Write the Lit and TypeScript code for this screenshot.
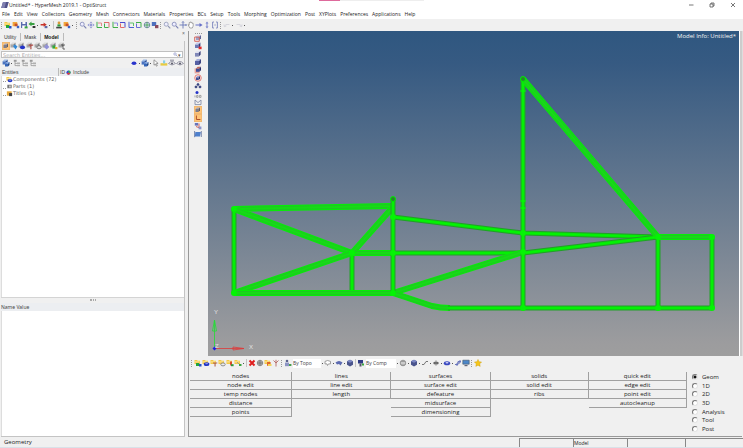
import { LitElement, html, svg, css } from "lit";
import { customElement, property, state } from "lit/decorators.js";

const box = (x: number, y: number, s: number, front: string, top: string, side: string) => svg`
  <path fill=${front} d="M${x} ${y + s / 3}h${(s * 2) / 3}v${(s * 2) / 3}h-${(s * 2) / 3}z"/>
  <path fill=${top} d="M${x} ${y + s / 3}l${s / 3}-${s / 3}h${(s * 2) / 3}l-${s / 3} ${s / 3}z"/>
  <path fill=${side} d="M${x + (s * 2) / 3} ${y + s / 3}l${s / 3}-${s / 3}v${(s * 2) / 3}l-${s / 3} ${s / 3}z"/>`;
const folder = svg`<path fill="#f3c948" d="M0.5 1h2.5l.7.8h2.3v3.2h-5.5z"/><path fill="#ffe9a0" d="M1 2.4h4.5v1h-4.5z"/>`;
const blueBox = box(1, 1, 6, "#5560a4", "#a6b0dc", "#3c4582");
const greyBox = box(0.5, 0.5, 5, "#a6a6a6", "#dadada", "#808080");
const axes = (a: string, b: string, flip: boolean) =>
  flip
    ? svg`<path fill="none" stroke=${a} stroke-width="1" d="M1 1.5h5v5"/><path fill="none" stroke=${b} stroke-width="1" d="M1.5 2.5v4h4"/>`
    : svg`<path fill="none" stroke=${a} stroke-width="1" d="M2 .8v5.7h5"/><path fill="none" stroke=${b} stroke-width="1" d="M3 2h3.5v3"/>`;
const eye = svg`<path fill="none" stroke="#889" stroke-width=".8" d="M.5 4.5q3.5-4 7 0q-3.5 3-7 0z"/><circle cx="4" cy="4.4" r="1" fill="#556"/>`;
const lens = (c: string) => svg`<circle cx="3.2" cy="3.2" r="2" fill="#eef" stroke=${c} stroke-width=".8"/><path stroke=${c} stroke-width="1.1" d="M5 5l2.3 2.3"/>`;

const glyphs: Record<string, unknown> = {
  fGreen: svg`${folder}<path fill="#22a53a" d="M2 4h3.2v3H2z"/><path fill="#2452c8" d="M5 5h2.5v2.5H5z"/>`,
  fRed: svg`${folder}<path fill="#d42b1e" d="M4.2 2.500h1.600v4H4.200z"/><path fill="#2c9a35" d="M5 5.2h2.6v2H5z"/>`,
  fBlue: svg`${folder}<ellipse cx="4.6" cy="5.2" rx="2.8" ry="1.9" fill="#2336c4"/><ellipse cx="4.6" cy="4.6" rx="1.5" ry=".7" fill="#8c9bf2"/>`,
  fT: svg`${folder}<path fill="#b0604a" d="M3 3.4h4.3v1.1H5.6v3H4.5v-3H3z"/>`,
  fGrey: svg`${folder}<ellipse cx="5" cy="5.4" rx="2.2" ry="1.5" fill="#eee" stroke="#777" stroke-width=".8"/>`,
  fDot: svg`${folder}<path fill="none" stroke="#999" stroke-width=".9" d="M3 3l3 3"/><path fill="#3aa63e" d="M5 5h2.5v2H5z"/>`,
  save: svg`<path fill="#5a6cae" d="M1 1h6v6H1z"/><path fill="#fff" d="M2.4 1h3v2h-3zM2.2 4.4h3.6V7H2.2z"/><path fill="#3aa63e" d="M4.6 5.4h3v2h-3z"/>`,
  imp: svg`<path fill="#39a042" d="M.5 3l3-2.4v1.5h3v1.8h-3v1.4z"/><path fill="#333" d="M4.6 5h2.8v2H4.6z"/>`,
  exp: svg`<path fill="#c8352a" d="M.6 3h3V1.600l3.200 2.200-3.200 2V4.600h-3z"/><path fill="#606aa8" d="M4.600 5h2.800v2.200H4.600z"/>`,
  user: svg`<circle cx="4" cy="2" r="1.400" fill="#d89a3a"/><path fill="#2d9b3a" d="M2.400 3.400h3.200V5.500H2.400z"/><path fill="#444" d="M1.200 5.800h5.600v1.600H1.200z"/>`,
  fOrange: svg`<path fill="#f2a63a" d="M.6 1h4.600v4.200H.6z"/><path fill="#c7502a" d="M2.600 2.600h3v2.600h-3z"/><path fill="#3c64c8" d="M4.800 4.800h2.400v2.400H4.800z"/>`,
  lens: lens("#7c84b4"),
  lensGrey: lens("#9098b4"),
  fit: svg`<path fill="#9298d4" d="M4 .4l1.500 1.800H2.500zM4 7.600l1.500-1.800H2.500zM.4 4l1.800-1.500v3zM7.600 4L5.800 2.500v3z"/><path fill="#9298d4" d="M2.800 2.800h2.400v2.400H2.800z"/>`,
  xy: axes("#3fae48", "#e08a8a", false),
  yx: axes("#e06a6a", "#3fae48", true),
  xz: axes("#3fae48", "#8a8ae0", false),
  zx: axes("#4a4ad0", "#e06a6a", true),
  yz: axes("#4a62d0", "#60c468", false),
  zy: axes("#3fae48", "#6a6ad8", true),
  globe: svg`<circle cx="4" cy="4" r="2.800" fill="#d6dff2" stroke="#6a76a0" stroke-width=".8"/><path fill="none" stroke="#3fa04a" stroke-width=".8" d="M1 4h6M4 1v6"/>`,
  shade: svg`<path fill="#4e70be" d="M.8 1h4.400v4H.8z"/><path fill="#8a4a5c" d="M4 4h3.400v3.200H4z"/>`,
  cross: svg`<path stroke="#6a78b8" fill="none" stroke-width=".9" d="M4 .5v7M.5 4h7M3 1.600l1-1 1 1M6.500 3l1 1-1 1"/>`,
  hand: svg`<path fill="#fff" stroke="#888" stroke-width=".7" d="M1 3.600l1.200.6V1.600h1V1h1v.6h1v.8h1V5L5.300 7H2.800z"/>`,
  arrow: svg`<path fill="#6670c8" d="M.5 3.500h4V2L7.600 4 4.500 6V4.500h-4z"/>`,
  updown: svg`<path fill="#7a84cc" d="M4 .4l1.500 2H4.500v3.200h1L4 7.600l-1.500-2h1V2.400h-1z"/>`,
  brace: svg`<path fill="none" stroke="#7a84bc" stroke-width=".9" d="M3 1H1.600v6H3M5 1h1.400v6H5M3.400 4h1.300"/>`,
  undo: svg`<path fill="none" stroke="#d2d2da" stroke-width=".9" d="M1.400 5.500q.5-3 5-2M1 3.400l.4 2.300 2-.7"/>`,
  redo: svg`<path fill="none" stroke="#d2d2da" stroke-width=".9" d="M6.600 5.500q-.5-3-5-2M7 3.400l-.4 2.300-2-.7"/>`,
  bBlue: svg`${greyBox}<path fill="#338ad8" d="M3 4l2-1.500L7.500 4.600 5.500 7.400z"/>`,
  bEll: svg`${greyBox}<ellipse cx="4.500" cy="5.400" rx="2.600" ry="1.800" fill="#2434c8"/>`,
  bT: svg`${greyBox}<path fill="#b0504a" d="M2.600 2.600h4.600v1.200H5.500v3.400H4.300V3.800H2.600z"/>`,
  bDisk: svg`${greyBox}<ellipse cx="5" cy="5.200" rx="2.200" ry="1.600" fill="#ddd" stroke="#666" stroke-width=".8"/>`,
  bFit: svg`${greyBox}<path fill="#9292d8" d="M4.600 2l2.800 3-2.800 2.600L2 5z"/>`,
  bGreen: svg`${greyBox}<path fill="#32a73c" d="M2.400 3.400h3v3.200h-3z"/><path fill="#d8b42e" d="M5 5h2.400v2.200H5z"/>`,
  bTree: svg`${greyBox}<path fill="none" stroke="#555" stroke-width=".9" d="M3 3h4M5 3v4h2"/>`,
  cube: blueBox,
  blueCubes: svg`${box(0.6, 0.6, 5, "#4a74c0", "#9cbbe8", "#2d4f98")}${box(3, 3, 4.5, "#3465b8", "#88aee8", "#234888")}`,
  tree: svg`<path fill="#999" d="M.8.8h2.800v2H.8z"/><path fill="none" stroke="#999" stroke-width=".8" d="M2 2.800v3.800h2M2 4.400h2"/><path fill="#b0b0b0" d="M4 3.400h3v1.600H4zM4 5.800h3v1.500H4z"/>`,
  dot: svg`<ellipse cx="4" cy="4.200" rx="2.400" ry="1.700" fill="#2a34cc"/>`,
  pointer: svg`<path fill="#fff" stroke="#777" stroke-width=".7" d="M2 .8v5.400l1.400-1.200 1 2.200.9-.5-1-2.100 1.800-.2z"/>`,
  shapes: svg`<path fill="#e8cb42" d="M.5 6.600h6.800V4.200H.5z"/><path fill="#8ad0e8" d="M3 1.400h2.200v3H3z"/>`,
  eye: eye,
  eyeUp: svg`${eye}<path stroke="#889" d="M2 1.200h4"/>`,
  redFrame: svg`${box(2, 1, 5, "#9aa0c8", "#d8daee", "#5f6598")}<path fill="none" stroke="#d45a50" stroke-width=".9" d="M.7 3h4.600v4.300H.7z"/>`,
  cubeRed: svg`${box(1, 0.6, 5.4, "#6c78b4", "#c4caea", "#343c7c")}<path fill="#e02a2a" d="M4.600 4.600h3v2.600h-3z"/>`,
  cubeLight: svg`${box(1, 1, 5.6, "#8088b8", "#e2e4f2", "#3c447e")}`,
  cubeRing: svg`<circle cx="4" cy="4" r="3.300" fill="#fbe3e0" stroke="#dc6a62" stroke-width=".8"/>${box(2, 2, 4, "#3f4c96", "#9aa6d6", "#27306c")}`,
  cubeFrame: svg`<path fill="#e6a49c" d="M.6 2.400h5v5h-5z"/>${box(2, 0.8, 5, "#3f4c96", "#c3695f", "#27306c")}`,
  diamonds: svg`<path fill="#3a4480" d="M4 .8l1.600 1.700L4 4.200 2.400 2.500zM2 3.200l1.700 1.700L2 6.600.3 4.900zM6 3.200l1.700 1.700L6 6.600 4.300 4.900z"/>`,
  dotSmall: svg`<circle cx="3" cy="2.500" r="1.500" fill="#2434c8"/><path fill="none" stroke="#888" stroke-width=".7" d="M1 5.400v2M2.600 5.400H4v2H2.600zM5.400 5.400H7v2H5.400z"/>`,
  mesh: svg`<path fill="none" stroke="#7a84a0" stroke-width=".8" d="M1 2v4.600h6V2L4 4.600z"/>`,
  oBox: svg`<path fill="#ffc477" stroke="#e6a04a" stroke-width=".6" d="M.2.2h7.600v7.600H.2z"/>${box(1.5, 1.5, 4.5, "#7c7c8c", "#a8a8b8", "#5c5c68")}`,
  oAxis: svg`<path fill="#ffc477" stroke="#e6a04a" stroke-width=".6" d="M.2.2h7.600v7.600H.2z"/><path fill="none" stroke="#b0522a" d="M2.400 1.500v4h4"/>`,
  mix: svg`<path fill="#6874b8" d="M.8 1h3.400v2.600H.8z"/><path fill="none" stroke="#d45a50" stroke-width=".9" d="M2 4.500l5 2M5 1.500v4"/><path fill="#8a94cc" d="M4.600 4.500h2.800v2.800H4.600z"/>`,
  plane: svg`<path fill="#4f80cc" d="M1.400 2h5.400l-.8 4.400H.8z"/><path fill="none" stroke="#2a427c" stroke-width=".6" d="M.6 1v6.200M7.300 1v6"/>`,
  del: svg`<path stroke="#e01f1f" stroke-width="2" d="M1.500 1.500l5 5M6.500 1.500l-5 5"/>`,
  sphere: svg`<circle cx="4" cy="4" r="2.800" fill="#aaa" stroke="#7b7b7b" stroke-width=".6"/><path stroke="#666" stroke-width=".6" d="M1 4h6M4 1v6"/>`,
  helix: svg`${folder}<path fill="#e0672a" d="M3 3h3.600v3.800H3z"/><path fill="#f6d558" d="M4 5h3.500v2H4z"/>`,
  fork: svg`<path fill="none" stroke="#b66a66" stroke-width=".9" d="M4 7.500V3.500M1.500 1.500L4 4l2.500-2.500M4 .8v3"/>`,
  person: svg`<circle cx="3" cy="2" r="1.300" fill="#5a628c"/><path fill="#8c94c4" d="M1 3.600h4v3.600H1z"/><path fill="#47a04d" d="M5 5h2.400v2H5z"/>`,
  topo: svg`<path fill="#2f3a84" d="M1 1h5v3.500H1z"/><path fill="#55556a" d="M2.500 4.500h2v3h-2z"/><path fill="#3aa63e" d="M5 4.500h2v2H5z"/>`,
  bulb: svg`<path fill="#fff" stroke="#888" stroke-width=".8" d="M1 2.400q2.500-1.800 5.500 0v2.500H4.500L3.500 6.500 3 4.900H1z"/>`,
  surf: svg`<path fill="#5c6ab0" d="M.5 3.500q3.500-3 7 0L5.500 6.500 4 5 2 5.500z"/>`,
  wire: svg`<circle cx="4" cy="4" r="2.800" fill="none" stroke="#888" stroke-width=".8"/><path fill="none" stroke="#888" stroke-width=".7" d="M2 2.500h4v3.500H2zM4 1v6"/>`,
  hex: svg`<path fill="#4a548c" d="M4 .7l3 1.600v3.500L4 7.400 1 5.800V2.300z"/><path fill="#7d88c4" d="M4 .7l3 1.600-3 1.500-3-1.500z"/>`,
  slash: svg`<path stroke="#777" fill="none" stroke-width="1" d="M1 5.500h2l2-3h2"/>`,
  disk: svg`<ellipse cx="4" cy="4" rx="2.800" ry="1.500" fill="#666"/><path stroke="#888" stroke-width=".6" d="M4 1v6"/>`,
  diskBlue: svg`<ellipse cx="4" cy="4.200" rx="3.200" ry="2" fill="#3b49c0"/><ellipse cx="4" cy="3.800" rx="1.500" ry=".8" fill="#d4d8f6"/>`,
  steps: svg`<path fill="none" stroke="#6a76bc" stroke-width="1" d="M1 5.500h3V2.500h3M3 7V4h3V1"/>`,
  monitor: svg`<path fill="#4b86c8" stroke="#456" stroke-width=".6" d="M.8 1.200h6.400v4H.8z"/><path fill="#667" d="M2.500 6h3v1.200h-3z"/>`,
  star: svg`<path fill="#f5c518" stroke="#c79a10" stroke-width=".4" d="M4 .4l1.100 2.300 2.500.3-1.800 1.800.4 2.600L4 6.200 1.800 7.400l.4-2.600L.4 3l2.500-.3z"/>`,
  wheel: svg`<circle cx="4" cy="4" r="3.400" fill="#3448d8"/><path fill="#38c04a" d="M4 4V.6a3.400 3.400 0 0 1 3 5z"/><path fill="#e23a3a" d="M4 4l3 1.700a3.400 3.400 0 0 1-6 0z"/>`,
  part: svg`<path fill="#777" d="M1.500 2h5v4h-5z"/><path fill="#ccc" d="M3.500 2.800h2v2.400h-2z"/>`,
  title: svg`<path fill="#e8a93a" d="M1 1.500h5.500v5H1z"/><path fill="#444" d="M3.500 3.500h3.500v3.500H3.500z"/>`,
  logo: svg`<path fill="#52528a" d="M2 1h5.800L6 7H.2z"/><path fill="#8080b0" d="M2 1h3L3.500 7H.2z"/>`,
};

/** One 8px toolbar picture. */
@customElement("hm-icon")
class HmIcon extends LitElement {
  @property() name = "";
  static styles = css`
    :host { display: block; flex: none; width: 8px; height: 8px; }
    .pic { display: block; width: 100%; height: 100%; }
  `;
  render() {
    return html`<svg class="pic" viewBox="0 0 8 8" aria-hidden="true">${glyphs[this.name]}</svg>`;
  }
}

/** A row or column of icon buttons. "|" is a separator, ":" a grip, "v" a drop arrow. */
@customElement("hm-tools")
class HmTools extends LitElement {
  @property() items = "";
  @property({ type: Boolean, reflect: true }) vertical = false;
  static styles = css`
    :host { display: flex; align-items: center; flex: none; }
    :host([vertical]) { flex-direction: column; }
    .tool { all: unset; display: block; width: 8px; height: 8px; flex: none; }
    .sep { width: 1px; height: 8px; margin: 0 1px; background: #c4c4c4; }
    .grip { box-sizing: border-box; width: 1px; height: 7px; margin: 0 2px 0 1px; border-left: 1px dotted #999; }
    .drop { width: 1px; height: 1px; margin: 0 var(--drop-gap, 2px) 0 1px; background: #555; }
    :host([vertical]) .grip { width: 7px; height: 1px; margin: 0; border-left: 0; border-top: 1px dotted #999; }
  `;
  render() {
    return this.items.split(" ").map((n) =>
      n === "|" ? html`<span class="sep"></span>`
      : n === ":" ? html`<span class="grip"></span>`
      : n === "v" ? html`<span class="drop"></span>`
      : html`<button class="tool" aria-label=${n}><hm-icon name=${n}></hm-icon></button>`);
  }
}

type Tube = [string, "wide" | "slim"];
const tubes: Tube[] = [
  ["M26 178V262", "slim"],
  ["M144 222V262", "slim"],
  ["M450 206V277", "slim"],
  ["M504 206V277", "slim"],
  ["M185 186L315 202L450 206", "slim"],
  ["M144 222H185", "wide"],
  ["M185 222H315L450 206", "slim"],
  ["M26 178L185 175", "wide"],
  ["M26 178L144 222", "wide"],
  ["M26 262L144 222", "wide"],
  ["M144 222L185 176", "wide"],
  ["M26 262H185", "wide"],
  ["M185 262L315 221", "wide"],
  ["M185 262L224 275Q232 277 242 277", "wide"],
  ["M240 277H504", "slim"],
  ["M185 168V262", "slim"],
  ["M315 48V277", "slim"],
  ["M315 48L450 206", "wide"],
  ["M450 206H504", "wide"],
];

@customElement("hm-viewport")
class HmViewport extends LitElement {
  static styles = css`
    :host { display: block; position: relative; min-width: 0; min-height: 0; overflow: hidden;
      background: linear-gradient(#2f5780 0%, #365a82 10%, #9c9c9e 96%, #9e9e9e 100%); }
    .scene { position: absolute; inset: 0; width: 100%; height: 100%; }
    .info { position: absolute; top: 1px; right: 3px; color: #f4f4f4; font: 6px/8px "Open Sans", sans-serif; }
    .tube { fill: none; stroke-linejoin: round; }
    .axis { font: 6px "Liberation Sans", sans-serif; fill: #e4e4e4; }
  `;
  render() {
    const layer = (d: string, color: string, w: number) => svg`<path class="tube" d=${d} stroke=${color} stroke-width=${w}/>`;
    return html`
      <svg class="scene" viewBox="0 0 531 325" preserveAspectRatio="xMidYMid meet" role="img" aria-label="Frame model">
        ${tubes.map(([d, k]) => k === "slim"
          ? svg`${layer(d, "#22a028", 5)}${layer(d, "#08e808", 3)}${layer(d, "#00fa00", 1)}`
          : svg`${layer(d, "#06ee06", 6)}${layer(d, "#1ec822", 4)}${layer(d, "#16dc16", 2)}`)}
        ${[[26, 178], [26, 262], [185, 262], [144, 222], [185, 222], [185, 186], [315, 202], [315, 221], [315, 277],
           [450, 206], [504, 206], [504, 277], [450, 277]].map(([x, y]) =>
          svg`<circle cx=${x} cy=${y} r="3" fill="#04f404"/>`)}
        ${[[185, 168], [315, 48]].map(([x, y]) =>
          svg`<circle cx=${x} cy=${y} r="2.500" fill="#27862c" stroke="#00ee00"/>`)}
        <path stroke="#0f0" d="M312 60h6M312 170h6M312 177h6"/>
        <path stroke="#22dd33" fill="none" stroke-width=".8" d="M6.500 318V290M6.500 289l-2 11h4z"/>
        <path stroke="#dd3a3a" fill="none" stroke-width=".8" d="M7 317.500H36M36 317.500l-11-1.500v3z"/>
        <path fill="#2020dd" d="M6.500 315.500l2 2-2 2-2-2z"/>
        <text class="axis" x="6" y="283">Y</text>
        <text class="axis" x="7" y="317">Z</text>
        <text class="axis" x="41" y="318">X</text>
      </svg>
      <span class="info">Model Info: Untitled*</span>`;
  }
}

const menus = ["File", "Edit", "View", "Collectors", "Geometry", "Mesh", "Connectors", "Materials", "Properties", "BCs",
  "Setup", "Tools", "Morphing", "Optimization", "Post", "XYPlots", "Preferences", "Applications", "Help"];
const panelColumns = [
  ["nodes", "node edit", "temp nodes", "distance", "points"],
  ["lines", "line edit", "length", "", ""],
  ["surfaces", "surface edit", "defeature", "midsurface", "dimensioning"],
  ["solids", "solid edit", "ribs", "", ""],
  ["quick edit", "edge edit", "point edit", "autocleanup", ""],
];
const pages = ["Geom", "1D", "2D", "3D", "Analysis", "Tool", "Post"];

@customElement("app-root")
class AppRoot extends LitElement {
  @state() private page = "Geom";
  @state() private tab = "Model";

  static styles = css`
    :host { display: flex; flex-direction: column; height: 100vh; overflow: hidden; background: #f0f0f0; color: #333;
      font: 5px/8px "Open Sans", sans-serif; }
    * { box-sizing: border-box; }
    button { all: unset; box-sizing: border-box; white-space: nowrap; }
    .title { display: flex; align-items: center; height: 10px; flex: none; background: #fff; padding-left: 1px; position: relative; }
    .title .name { flex: 1; color: #222; }
    .strip { position: absolute; top: 0; left: 43%; width: 14%; height: 1px; background: linear-gradient(90deg, #de6a9c 20%, #eee 20%); }
    .win { width: 21px; display: flex; justify-content: center; }
    .win svg { width: 6px; height: 6px; fill: none; stroke: #555; stroke-width: .8; }
    .menu { display: flex; gap: 4px; height: 9px; line-height: 9px; flex: none; background: #fff; padding-left: 2px; color: #222; }
    .bar { display: flex; align-items: center; height: 12px; flex: none; }
    .main { display: flex; flex: 1; min-height: 0; }
    .side { width: 188px; flex: none; display: flex; flex-direction: column; padding: 0 3px 1px 1px; --drop-gap: 1px; }
    .tabs { display: flex; align-items: flex-end; height: 10px; font-family: "Liberation Sans", sans-serif; }
    .tab { padding: 0 4px 0 3px; height: 8px; border-right: 1px solid #bbb; }
    .tab.on { font-weight: 700; color: #111; }
    .close { margin-left: auto; align-self: flex-start; line-height: 5px; color: #666; }
    .inner { flex: 1; min-height: 0; display: flex; flex-direction: column; border: 1px solid #c4c4c4; border-width: 0 1px 1px 0; }
    .row { display: flex; align-items: center; justify-content: space-between; height: 10px; flex: none; padding-left: 1px; }
    .search { display: flex; align-items: center; height: 7px; flex: none; margin-right: 1px; padding-right: 1px; border: 1px solid #c0c0c0; background: #fff; color: #555; }
    .search input { flex: 1; min-width: 0; height: 5px; border: 0; padding: 0 1px; font: 5px/5px "DejaVu Sans", sans-serif; background: none; outline: 0; }
    .search input::placeholder { color: #aaa; }
    .find { width: 5px; height: 5px; }
    .head { display: flex; align-items: center; height: 8px; flex: none; color: #444; background: #eceef1; font-family: "Liberation Sans", sans-serif; }
    .head .col { width: 57px; padding-left: 1px; }
    .head .plain { font-family: "Noto Sans", sans-serif; }
    .id { display: flex; align-items: center; gap: 1px; margin-right: 2px; padding-left: 1px; border-left: 1px solid #bbb; }
    .tint { width: 5px; height: 5px; }
    .white { background: #fff; flex: 1; min-height: 0; border-left: 1px solid #ddd; }
    .tree { margin: 0; padding: 0; list-style: none; color: #666; font-family: "DejaVu Sans", sans-serif; }
    .node { display: flex; align-items: center; height: 7px; padding-left: 1px; line-height: 7px; }
    .node::before { content: ""; width: 3px; height: 3px; border-bottom: 1px dotted #999; }
    .node .pic { width: 7px; height: 7px; }
    .split { height: 6px; flex: none; display: flex; align-items: center; justify-content: center; border-top: 1px solid #d4d4d4; }
    .split span { width: 6px; height: 2px; border: 1px dotted #aaa; border-width: 1px 0; }
    .props { flex: 125; }
    .treebox { flex: 220; }
    .work { flex: 1; min-width: 0; display: flex; flex-direction: column; border-left: 1px solid #999; margin-bottom: 1px; }
    .stage { flex: 1; min-height: 0; display: flex; border-right: 1px solid #ddd; }
    .stage hm-viewport { flex: 1; }
    .rail { width: 19px; flex: none; padding: 2px 1px 0 0; box-sizing: border-box; }
    .edge { width: 3px; flex: none; background: linear-gradient(90deg, #fff 50%, #ccc 50%); }
    .view-tools { display: flex; align-items: center; height: 16px; flex: none; padding: 0 0 2px 1px; --drop-gap: 1px; }
    .combo { appearance: none; border: 0; border-radius: 0; background: #fff; color: #444; height: 9px; width: 28px; padding: 0; margin-left: 1px; font: 5px/9px "Open Sans", sans-serif; }
    .combo.wide { width: 30px; }
    .panel { display: flex; height: 65px; flex: none; padding: 0 1px 3px 1px; border-bottom: 1px solid #999; margin-right: 1px; font: 6px/8px "Open Sans", sans-serif; color: #222; }
    .cols { display: grid; grid-template-columns: 102fr 99fr 99fr 98fr 98fr; flex: 1; height: 44px; }
    .cell-col { display: grid; grid-template-rows: repeat(5, 1fr); }
    .cmd { text-align: center; border: 1px solid #a0a0a0; border-width: 0 1px 1px 0; line-height: 8px; }
    .pages { width: 49px; flex: none; display: flex; flex-direction: column; margin: 1px 0 0 5px; }
    .page { flex: 1; display: flex; align-items: center; gap: 4px; }
    .page input { appearance: none; margin: 0; width: 6px; height: 6px; border-radius: 50%; background: #fff; border: 1px solid; border-color: #777 #e4e4e4 #e4e4e4 #777; }
    .page input:checked { background: radial-gradient(circle, #111 1px, #fff 2px); }
    .status { display: grid; grid-template-columns: 1fr 54px 54px 58px 58px; height: 10px; flex: none; line-height: 8px; border-bottom: 1px solid #d9e1e8; font-family: "Open Sans", sans-serif; font-size: 6px; color: #222; }
    .status .msg { padding-left: 4px; }
    .status .slot { border: 1px solid #888; border-width: 1px 0 0 1px; font-size: 5px; }
  `;

  render() {
    return html`
      <header class="title">
        <hm-icon name="logo"></hm-icon>
        <span class="name">Untitled* - HyperMesh 2019.1 - OptiStruct</span>
        <span class="strip"></span>
        <button class="win" aria-label="Minimise"><svg viewBox="0 0 6 6"><path d="M1 3h4.500"/></svg></button>
        <button class="win" aria-label="Restore"><svg viewBox="0 0 6 6"><path d="M1 2h3v3H1zM2 2V1h3v3H4"/></svg></button>
        <button class="win" aria-label="Close"><svg viewBox="0 0 6 6"><path d="M1 1l4 4M5 1L1 5"/></svg></button>
      </header>
      <nav class="menu">${menus.map((m) => html`<button>${m}</button>`)}</nav>
      <div class="bar">
        <hm-tools items=": fGreen fOrange save imp v exp v | user fOrange v : lens fit xy yx xz zx yz zy globe shade : lensGrey lens cross hand arrow updown brace : undo v redo v"></hm-tools>
      </div>
      <div class="main">
        <aside class="side">
          <div class="tabs">
            ${["Utility", "Mask", "Model"].map((t) => html`
              <button class="tab ${t === this.tab ? "on" : ""}" @click=${() => (this.tab = t)}>${t}</button>`)}
            <button class="close" aria-label="Close panel">×</button>
          </div>
          <div class="inner">
            <div class="row">
              <hm-tools items="oBox bBlue bEll bT bDisk bFit bGreen bTree"></hm-tools>
            </div>
            <div class="search">
              <input aria-label="Search" placeholder="Search Entities...">
              <hm-icon class="find" name="lens"></hm-icon><span>▾</span>
            </div>
            <div class="row">
              <hm-tools items="blueCubes v tree tree tree"></hm-tools>
              <hm-tools items="dot v blueCubes v pointer shapes eyeUp eye"></hm-tools>
            </div>
            <div class="head"><span class="col">Entities</span><span class="id">ID<hm-icon class="tint" name="wheel"></hm-icon></span><span>Include</span></div>
            <div class="white treebox">
              <ul class="tree">
                <li class="node"><hm-icon class="pic" name="fBlue"></hm-icon>Components (72)</li>
                <li class="node"><hm-icon class="pic" name="part"></hm-icon>Parts (1)</li>
                <li class="node"><hm-icon class="pic" name="title"></hm-icon>Titles (1)</li>
              </ul>
            </div>
            <div class="split"><span></span></div>
            <div class="head"><span class="plain">Name Value</span></div>
            <div class="white props"></div>
          </div>
        </aside>
        <section class="work">
          <div class="stage">
            <hm-tools class="rail" vertical items=": redFrame cubeRed cubeLight cube cubeFrame cubeRing diamonds dotSmall mesh oBox oAxis mix plane"></hm-tools>
            <hm-viewport></hm-viewport>
            <span class="edge"></span>
          </div>
          <div class="view-tools">
            <hm-tools items=": fGreen fBlue fT fGrey fRed fDot v | del sphere helix fork : person"></hm-tools>
            <select class="combo" aria-label="Geometry colour"><option>By Topo</option></select>
            <hm-tools items="v bulb v surf v hex | topo"></hm-tools>
            <select class="combo wide" aria-label="Element colour"><option>By Comp</option></select>
            <hm-tools items="v wire v hex v slash v disk v diskBlue v steps monitor : star"></hm-tools>
          </div>
          <div class="panel">
            <div class="cols">
              ${panelColumns.map((c) => html`<div class="cell-col">${c.map((t) => t ? html`<button class="cmd">${t}</button>` : "")}</div>`)}
            </div>
            <div class="pages">
              ${pages.map((p) => html`<label class="page"><input type="radio" name="page" .checked=${p === this.page} @change=${() => (this.page = p)}>${p}</label>`)}
            </div>
          </div>
        </section>
      </div>
      <footer class="status">
        <span class="msg">Geometry</span><span class="slot"></span><span class="slot">Model</span><span class="slot"></span><span class="slot"></span>
      </footer>`;
  }
}
